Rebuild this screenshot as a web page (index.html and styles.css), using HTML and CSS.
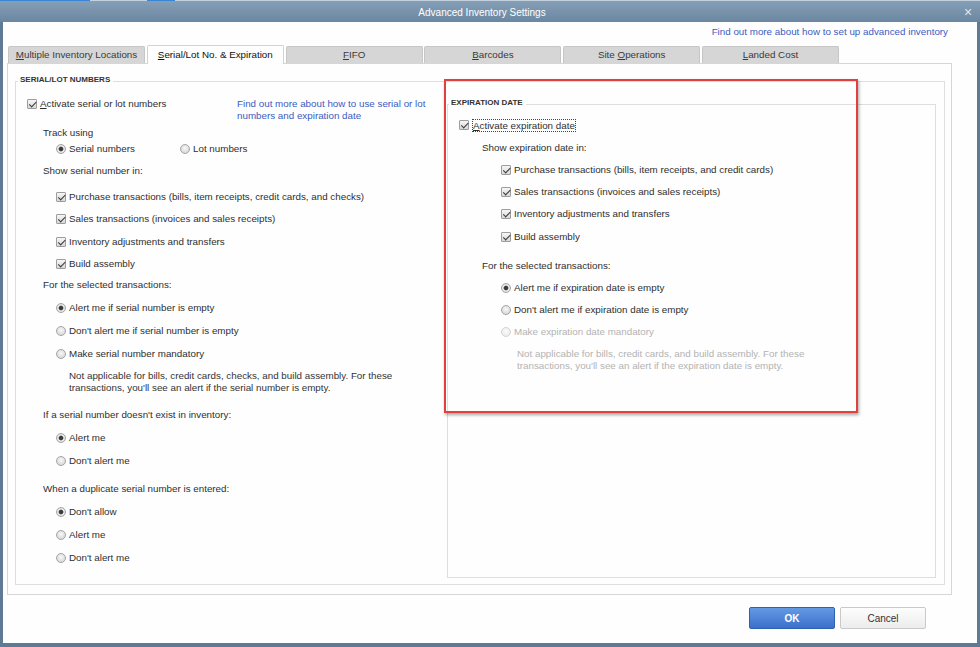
FILE: index.html
```html
<!DOCTYPE html>
<html lang="en">
<head>
    <meta charset="UTF-8">
    <title>Advanced Inventory Settings</title>
    <link rel="stylesheet" href="styles.css">
</head>
<body>
    <div class="window">
        <div class="titlebar">
            <span class="title">Advanced Inventory Settings</span>
            <span class="close">&times;</span>
        </div>
        <div class="body">
            <div class="toplink">Find out more about how to set up advanced inventory</div>
            <div class="tabs">
                <div class="tab"><u>M</u>ultiple Inventory Locations</div>
                <div class="tab active"><u>S</u>erial/Lot No. &amp; Expiration</div>
                <div class="tab"><u>F</u>IFO</div>
                <div class="tab"><u>B</u>arcodes</div>
                <div class="tab">Site <u>O</u>perations</div>
                <div class="tab"><u>L</u>anded Cost</div>
            </div>
            <div class="panel">
                <fieldset class="group">
                    <legend>SERIAL/LOT NUMBERS</legend>
                    <div class="group-body">
                        <div class="col-left">
                            <div class="row master">
                                <span class="box checked"></span>
                                <span class="master-label"><u>A</u>ctivate serial or lot numbers</span>
                                <span class="link">Find out more about how to use serial or lot<br>numbers and expiration date</span>
                            </div>
                            <div class="row heading h-track">Track using</div>
                            <div class="row opt choices">
                                <span class="choice"><span class="radio on"></span>Serial numbers</span>
                                <span class="radio"></span>Lot numbers
                            </div>
                            <div class="row heading h-show">Show serial number in:</div>
                            <div class="row opt cb first"><span class="box checked"></span>Purchase transactions (bills, item receipts, credit cards, and checks)</div>
                            <div class="row opt cb"><span class="box checked"></span>Sales transactions (invoices and sales receipts)</div>
                            <div class="row opt cb"><span class="box checked"></span>Inventory adjustments and transfers</div>
                            <div class="row opt cb"><span class="box checked"></span>Build assembly</div>
                            <div class="row heading h-selected">For the selected transactions:</div>
                            <div class="row opt"><span class="radio on"></span>Alert me if serial number is empty</div>
                            <div class="row opt"><span class="radio"></span>Don't alert me if serial number is empty</div>
                            <div class="row opt"><span class="radio"></span>Make serial number mandatory</div>
                            <div class="note">Not applicable for bills, credit cards, checks, and build assembly. For these<br>transactions, you'll see an alert if the serial number is empty.</div>
                            <div class="row heading h-gap">If a serial number doesn't exist in inventory:</div>
                            <div class="row opt"><span class="radio on"></span>Alert me</div>
                            <div class="row opt"><span class="radio"></span>Don't alert me</div>
                            <div class="row heading h-gap">When a duplicate serial number is entered:</div>
                            <div class="row opt"><span class="radio on"></span>Don't allow</div>
                            <div class="row opt"><span class="radio"></span>Alert me</div>
                            <div class="row opt"><span class="radio"></span>Don't alert me</div>
                        </div>
                        <fieldset class="exp">
                            <legend>EXPIRATION DATE</legend>
                            <div class="exp-body">
                                <div class="row"><span class="box checked"></span><span class="focus"><u>A</u>ctivate expiration date</span></div>
                                <div class="row heading">Show expiration date in:</div>
                                <div class="row opt"><span class="box checked"></span>Purchase transactions (bills, item receipts, and credit cards)</div>
                                <div class="row opt"><span class="box checked"></span>Sales transactions (invoices and sales receipts)</div>
                                <div class="row opt"><span class="box checked"></span>Inventory adjustments and transfers</div>
                                <div class="row opt"><span class="box checked"></span>Build assembly</div>
                                <div class="row heading h-selected">For the selected transactions:</div>
                                <div class="row opt"><span class="radio on"></span>Alert me if expiration date is empty</div>
                                <div class="row opt"><span class="radio"></span>Don't alert me if expiration date is empty</div>
                                <div class="row opt disabled"><span class="radio"></span>Make expiration date mandatory</div>
                                <div class="note disabled">Not applicable for bills, credit cards, and build assembly. For these<br>transactions, you'll see an alert if the expiration date is empty.</div>
                            </div>
                        </fieldset>
                    </div>
                </fieldset>
            </div>
            <div class="buttons">
                <button class="btn ok">OK</button>
                <button class="btn">Cancel</button>
            </div>
        </div>
        <div class="highlight"></div>
    </div>
</body>
</html>
```

FILE: styles.css
```css
* { box-sizing: border-box; }
body { margin: 0; font-family: "Liberation Sans", Arial, sans-serif; font-size: 9.8px; color: #2e2e2e; background: #fff; }
.window { position: relative; width: 980px; height: 647px; overflow: hidden; }

/* title bar */
.titlebar {
    height: 22px; display: flex; align-items: center; color: #fff; font-size: 10px;
    background:
        linear-gradient(to right, #3a86d4 0 90px, #c3d1de 90px 147px, #3a86d4 147px 175px, #c3d1de 175px) top / 100% 1px no-repeat,
        linear-gradient(#86a0b8, #6b86a0);
}
.title { flex: 1; text-align: center; padding: 2px 0 0 8px; }
.close { width: 24px; text-align: center; font-size: 14px; color: #dfe6ed; padding-top: 1px; }

.body { height: 625px; border: solid #5f7a95; border-width: 0 3px 4px 3px; padding-top: 3px; background: #fefefe; }
.toplink { text-align: right; padding-right: 29px; line-height: 14px; color: #3b5cbf; }

/* tabs */
.tabs { position: relative; z-index: 1; display: flex; align-items: flex-end; gap: 1.8px; height: 19px; margin: 6px 0 -1px 5px; }
.tab {
    width: 137px; height: 17px; margin-bottom: 1px; text-align: center; line-height: 16px; color: #3a3a3a;
    background: #d6d6d6; border: 1px solid #c6c6c6; border-bottom: 0; border-radius: 2px 2px 0 0;
}
.tab.active { height: 19px; margin-bottom: 0; line-height: 18px; background: #fefefe; border-color: #d2d2d2; color: #111; }

.panel { width: 945px; height: 532px; margin-left: 4px; border: 1px solid #d6d6d6; padding: 11px 6px 9px 7px; }

fieldset { margin: 0; min-width: 0; border: 1px solid #dedede; }
legend { font-size: 8px; font-weight: bold; line-height: 10px; color: #333; padding: 0 3px 3px 2px; }
.group { height: 510px; padding: 0 8px 0 0; }
.group > legend { margin-left: 2px; }
.group-body { display: flex; }
.col-left { flex: 1; padding: 9px 0 0 11px; }
.exp { width: 489px; height: 480px; margin-top: 10px; padding: 0; }
.exp > legend { margin-left: 1px; }
.exp-body { padding: 7.2px 0 0 11px; }

/* rows */
.row { display: flex; align-items: center; height: 14px; line-height: 14px; white-space: nowrap; }
.master { align-items: flex-start; padding-top: 2px; }
.master-label { width: 197px; line-height: 10px; }
.link { color: #3b5cbf; line-height: 11.5px; margin-top: -1px; }

.col-left .heading { padding-left: 16px; }
.col-left .opt { padding-left: 29px; margin-top: 9px; }
.col-left .cb { margin-top: 8.4px; }
.col-left .cb.first { margin-top: 12px; }
.h-track { margin-top: 15px; }
.col-left .choices { margin-top: 2px; }
.choice { display: flex; align-items: center; width: 124px; }
.h-show { margin-top: 8px; }
.col-left .h-selected { margin-top: 6.8px; }
.h-gap { margin-top: 14px; }
.note { line-height: 12px; margin-top: 9px; padding-left: 42px; color: #333; }

.exp-body .heading { padding-left: 23px; margin-top: 8.4px; }
.exp-body .h-selected { margin-top: 14.8px; }
.exp-body .opt { padding-left: 42px; margin-top: 8.3px; }
.exp-body .note { padding-left: 58px; margin-top: 8.2px; }
.focus { outline: 1px dotted #444; outline-offset: -1px; padding: 0 1px; line-height: 13px; }
.disabled { color: #b3b3b3; }

/* check boxes and radios */
.box {
    position: relative; flex: none; width: 10px; height: 10px; margin-right: 3px;
    border: 1px solid #9d9d9d; border-radius: 1px; background: linear-gradient(#f6f6f6, #d8d8d8);
}
.box.checked::after {
    content: ""; position: absolute; left: 2.5px; top: 0; width: 2.5px; height: 5.5px;
    border: solid #3a3a3a; border-width: 0 1.5px 1.5px 0; transform: rotate(45deg);
}
.radio {
    flex: none; width: 10px; height: 10px; margin-right: 3px; border-radius: 50%;
    border: 1px solid #a5a5a5; background: radial-gradient(circle at 50% 40%, #f8f8f8, #cfcfcf);
}
.radio.on { background: radial-gradient(circle, #3b3b3b 0 1.7px, #8c8c8c 2.3px, #eeeeee 2.8px, #cdcdcd 100%); }
.disabled .radio { border-color: #d4d4d4; background: radial-gradient(circle at 50% 40%, #fbfbfb, #e6e6e6); }

/* buttons */
.buttons { display: flex; justify-content: flex-end; gap: 5px; margin-top: 12px; padding-right: 51px; }
.btn {
    width: 86px; height: 22px; font: 10px "Liberation Sans", Arial, sans-serif; color: #333;
    border: 1px solid #c9c9c9; border-radius: 2px; background: linear-gradient(#fdfdfd, #ececec);
}
.btn.ok { color: #fff; font-weight: bold; border-color: #2f61b3; background: linear-gradient(#649ae4, #3b6fcb); }

/* red callout drawn over the screenshot */
.highlight {
    position: absolute; left: 444px; top: 79px; width: 414px; height: 334px;
    border: 2px solid #e2403f; box-shadow: 1px 2px 3px rgba(0, 0, 0, 0.35); pointer-events: none;
}
```
